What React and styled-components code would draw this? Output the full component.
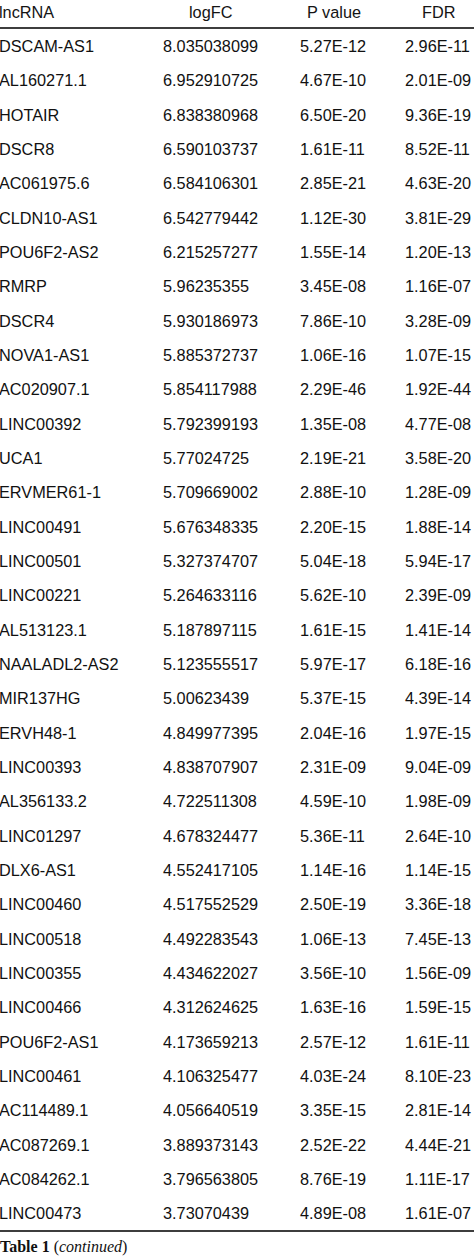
import React from "react";
import styled, { createGlobalStyle } from "styled-components";

const Global = createGlobalStyle`
  html, body { margin: 0; padding: 0; background: #ffffff; }
  body { font-family: "Liberation Sans", Arial, sans-serif; color: #111; }
`;

const rows = [
  ["DSCAM-AS1", "8.035038099", "5.27E-12", "2.96E-11"],
  ["AL160271.1", "6.952910725", "4.67E-10", "2.01E-09"],
  ["HOTAIR", "6.838380968", "6.50E-20", "9.36E-19"],
  ["DSCR8", "6.590103737", "1.61E-11", "8.52E-11"],
  ["AC061975.6", "6.584106301", "2.85E-21", "4.63E-20"],
  ["CLDN10-AS1", "6.542779442", "1.12E-30", "3.81E-29"],
  ["POU6F2-AS2", "6.215257277", "1.55E-14", "1.20E-13"],
  ["RMRP", "5.96235355", "3.45E-08", "1.16E-07"],
  ["DSCR4", "5.930186973", "7.86E-10", "3.28E-09"],
  ["NOVA1-AS1", "5.885372737", "1.06E-16", "1.07E-15"],
  ["AC020907.1", "5.854117988", "2.29E-46", "1.92E-44"],
  ["LINC00392", "5.792399193", "1.35E-08", "4.77E-08"],
  ["UCA1", "5.77024725", "2.19E-21", "3.58E-20"],
  ["ERVMER61-1", "5.709669002", "2.88E-10", "1.28E-09"],
  ["LINC00491", "5.676348335", "2.20E-15", "1.88E-14"],
  ["LINC00501", "5.327374707", "5.04E-18", "5.94E-17"],
  ["LINC00221", "5.264633116", "5.62E-10", "2.39E-09"],
  ["AL513123.1", "5.187897115", "1.61E-15", "1.41E-14"],
  ["NAALADL2-AS2", "5.123555517", "5.97E-17", "6.18E-16"],
  ["MIR137HG", "5.00623439", "5.37E-15", "4.39E-14"],
  ["ERVH48-1", "4.849977395", "2.04E-16", "1.97E-15"],
  ["LINC00393", "4.838707907", "2.31E-09", "9.04E-09"],
  ["AL356133.2", "4.722511308", "4.59E-10", "1.98E-09"],
  ["LINC01297", "4.678324477", "5.36E-11", "2.64E-10"],
  ["DLX6-AS1", "4.552417105", "1.14E-16", "1.14E-15"],
  ["LINC00460", "4.517552529", "2.50E-19", "3.36E-18"],
  ["LINC00518", "4.492283543", "1.06E-13", "7.45E-13"],
  ["LINC00355", "4.434622027", "3.56E-10", "1.56E-09"],
  ["LINC00466", "4.312624625", "1.63E-16", "1.59E-15"],
  ["POU6F2-AS1", "4.173659213", "2.57E-12", "1.61E-11"],
  ["LINC00461", "4.106325477", "4.03E-24", "8.10E-23"],
  ["AC114489.1", "4.056640519", "3.35E-15", "2.81E-14"],
  ["AC087269.1", "3.889373143", "2.52E-22", "4.44E-21"],
  ["AC084262.1", "3.796563805", "8.76E-19", "1.11E-17"],
  ["LINC00473", "3.73070439", "4.89E-08", "1.61E-07"],
];

const Page = styled.div`
  width: 474px;
  height: 1259px;
  overflow: hidden;
  background: #fff;
`;

const Table = styled.div`
  margin-left: -1px;
  width: 476px;
  border-bottom: 2px solid #3e3e3e;
`;

const columns = "164px 137px 105px 1fr";

const HeaderRow = styled.div`
  display: grid;
  grid-template-columns: ${columns};
  height: 23px;
  padding-bottom: 4px;
  align-items: center;
  border-bottom: 2px solid #3e3e3e;
`;

const HeaderCell = styled.div`
  font-size: 16.3px;
  line-height: 18px;
  white-space: nowrap;
  padding-left: ${(p) => p.$indent || 0}px;
  color: #141414;
`;

const Body = styled.div`
  display: flex;
  flex-direction: column;
`;

const Row = styled.div`
  display: grid;
  grid-template-columns: ${columns};
  height: calc(1202px / 35);
  align-items: center;
`;

const Cell = styled.div`
  font-size: 16.3px;
  line-height: 18px;
  white-space: nowrap;
  color: #111;
`;

const Caption = styled.div`
  font-family: "Liberation Serif", "Times New Roman", serif;
  font-size: 16px;
  line-height: 20px;
  padding-top: 5px;
  color: #111;
  white-space: nowrap;
`;

const Label = styled.span`
  font-weight: bold;
`;

const Italic = styled.i`
  font-style: italic;
`;

export default function App() {
  return (
    <Page>
      <Global />
      <Table>
        <HeaderRow>
          <HeaderCell>lncRNA</HeaderCell>
          <HeaderCell $indent={26}>logFC</HeaderCell>
          <HeaderCell $indent={7}>P value</HeaderCell>
          <HeaderCell $indent={17}>FDR</HeaderCell>
        </HeaderRow>
        <Body>
          {rows.map((r) => (
            <Row key={r[0]}>
              {r.map((v, i) => (
                <Cell key={i}>{v}</Cell>
              ))}
            </Row>
          ))}
        </Body>
      </Table>
      <Caption>
        <Label>Table 1</Label> (<Italic>continued</Italic>)
      </Caption>
    </Page>
  );
}
